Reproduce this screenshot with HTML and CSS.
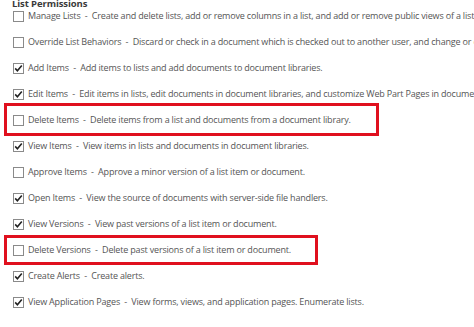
FILE: index.html
```html
<!DOCTYPE html>
<html>
<head>
<meta charset="utf-8">
<link rel="stylesheet" href="styles.css">
</head>
<body>
<div class="page">
  <div class="title">List Permissions</div>
  <ul class="perms">
    <li class="row"><span class="cb"></span><span class="txt">Manage Lists&nbsp;&nbsp;-&nbsp;&nbsp;Create and delete lists, add or remove columns in a list, and add or remove public views of a list.</span></li>
    <li class="row"><span class="cb"></span><span class="txt">Override List Behaviors&nbsp;&nbsp;-&nbsp;&nbsp;Discard or check in a document which is checked out to another user, and change or override settings.</span></li>
    <li class="row"><span class="cb on"><svg viewBox="0 0 11 11"><path d="M2.2 5.4 L4.4 7.8 L8.8 2.6" /></svg></span><span class="txt">Add Items&nbsp;&nbsp;-&nbsp;&nbsp;Add items to lists and add documents to document libraries.</span></li>
    <li class="row"><span class="cb on"><svg viewBox="0 0 11 11"><path d="M2.2 5.4 L4.4 7.8 L8.8 2.6" /></svg></span><span class="txt">Edit Items&nbsp;&nbsp;-&nbsp;&nbsp;Edit items in lists, edit documents in document libraries, and customize Web Part Pages in document libraries.</span></li>
    <li class="row"><span class="cb"></span><span class="txt">Delete Items&nbsp;&nbsp;-&nbsp;&nbsp;Delete items from a list and documents from a document library.</span></li>
    <li class="row"><span class="cb on"><svg viewBox="0 0 11 11"><path d="M2.2 5.4 L4.4 7.8 L8.8 2.6" /></svg></span><span class="txt">View Items&nbsp;&nbsp;-&nbsp;&nbsp;View items in lists and documents in document libraries.</span></li>
    <li class="row"><span class="cb"></span><span class="txt">Approve Items&nbsp;&nbsp;-&nbsp;&nbsp;Approve a minor version of a list item or document.</span></li>
    <li class="row"><span class="cb on"><svg viewBox="0 0 11 11"><path d="M2.2 5.4 L4.4 7.8 L8.8 2.6" /></svg></span><span class="txt">Open Items&nbsp;&nbsp;-&nbsp;&nbsp;View the source of documents with server-side file handlers.</span></li>
    <li class="row"><span class="cb on"><svg viewBox="0 0 11 11"><path d="M2.2 5.4 L4.4 7.8 L8.8 2.6" /></svg></span><span class="txt">View Versions&nbsp;&nbsp;-&nbsp;&nbsp;View past versions of a list item or document.</span></li>
    <li class="row"><span class="cb"></span><span class="txt">Delete Versions&nbsp;&nbsp;-&nbsp;&nbsp;Delete past versions of a list item or document.</span></li>
    <li class="row"><span class="cb on"><svg viewBox="0 0 11 11"><path d="M2.2 5.4 L4.4 7.8 L8.8 2.6" /></svg></span><span class="txt">Create Alerts&nbsp;&nbsp;-&nbsp;&nbsp;Create alerts.</span></li>
    <li class="row"><span class="cb on"><svg viewBox="0 0 11 11"><path d="M2.2 5.4 L4.4 7.8 L8.8 2.6" /></svg></span><span class="txt">View Application Pages&nbsp;&nbsp;-&nbsp;&nbsp;View forms, views, and application pages. Enumerate lists.</span></li>
  </ul>
  <div class="mark mark-1"></div>
  <div class="mark mark-2"></div>
</div>
</body>
</html>
```
FILE: styles.css
```css
html, body {
  margin: 0;
  padding: 0;
  background: #ffffff;
  overflow: hidden;
}
.page {
  position: relative;
  width: 474px;
  height: 327px;
  overflow: hidden;
  font-family: "Open Sans", "Noto Sans", sans-serif;
  color: #555555;
}
.title {
  margin: -2px 0 0 12px;
  font-size: 9.5px;
  font-weight: 700;
  line-height: 12px;
  letter-spacing: -0.1px;
  color: #3a3a3a;
}
.perms {
  list-style: none;
  margin: -1px 0 0 0;
  padding: 0 0 0 13px;
  display: flex;
  flex-direction: column;
}
.row {
  height: 26px;
  display: flex;
  align-items: flex-start;
  white-space: nowrap;
  font-size: 9px;
  line-height: 13px;
  letter-spacing: -0.18px;
}
.cb {
  flex: none;
  width: 9px;
  height: 9px;
  margin: 2px 4px 0 0;
  border: 1px solid #8a8a8a;
  background: #fff;
  position: relative;
}
.cb svg {
  position: absolute;
  left: -1px;
  top: -1px;
  width: 11px;
  height: 11px;
}
.cb svg path {
  fill: none;
  stroke: #222;
  stroke-width: 1.6;
}
.mark {
  position: absolute;
  border: 3px solid #e0101e;
  box-sizing: border-box;
}
.mark-1 {
  left: 4px;
  top: 103px;
  width: 375px;
  height: 33px;
}
.mark-2 {
  left: 4px;
  top: 235px;
  width: 314px;
  height: 30px;
}
```
